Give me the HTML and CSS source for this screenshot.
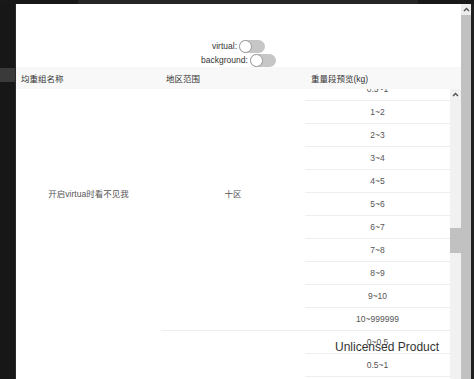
FILE: index.html
```html
<!DOCTYPE html>
<html lang="zh">
  <head>
    <meta charset="UTF-8" />
    <meta name="viewport" content="width=device-width, initial-scale=1.0" />
    <title>virtual table</title>
    <link rel="stylesheet" href="styles.css">
  </head>
  <body>
    <div class="topbar"><div class="topbar-tab"></div></div>
    <div class="screen">
      <div class="gutter"><div class="gutter-mark"></div></div>

      <div class="panel">
        <div class="controls">
          <div class="control"><span>virtual:</span><span class="switch"></span></div>
          <div class="control"><span>background:</span><span class="switch"></span></div>
        </div>

        <div class="table-head">
          <div class="th">均重组名称</div>
          <div class="th">地区范围</div>
          <div class="th">重量段预览(kg)</div>
        </div>

        <div class="table-body">
          <div class="scroll-view">
            <div class="rows">
              <div class="group">
                <div class="cell-name">开启virtua时看不见我</div>
                <div class="cell-area">十区</div>
                <div class="cell-list">
                  <div class="row">0~0.5</div>
                  <div class="row">0.5~1</div>
                  <div class="row">1~2</div>
                  <div class="row">2~3</div>
                  <div class="row">3~4</div>
                  <div class="row">4~5</div>
                  <div class="row">5~6</div>
                  <div class="row">6~7</div>
                  <div class="row">7~8</div>
                  <div class="row">8~9</div>
                  <div class="row">9~10</div>
                  <div class="row">10~999999</div>
                </div>
              </div>
              <div class="group">
                <div class="cell-name"></div>
                <div class="cell-area"></div>
                <div class="cell-list">
                  <div class="row">0~0.5</div>
                  <div class="row">0.5~1</div>
                  <div class="row">1~2</div>
                </div>
              </div>
            </div>
          </div>
          <div class="vbar inner">
            <div class="vbar-btn">
              <svg width="7" height="5" viewBox="0 0 7 5"><polyline points="1,4 3.5,1.5 6,4" fill="none" stroke="#505050" stroke-width="1.4"/></svg>
            </div>
            <div class="vbar-thumb"></div>
          </div>
        </div>

        <div class="watermark">Unlicensed Product</div>
      </div>

      <div class="vbar outer">
        <div class="vbar-btn">
          <svg width="7" height="5" viewBox="0 0 7 5"><polyline points="1,4 3.5,1.5 6,4" fill="none" stroke="#505050" stroke-width="1.4"/></svg>
        </div>
        <div class="vbar-thumb"></div>
      </div>
      <div class="edge"></div>
    </div>
  </body>
</html>
```

FILE: styles.css
```css
html, body {
  margin: 0;
  background: #1a1a1a;
  font-family: "Liberation Sans", "Noto Sans CJK SC", sans-serif;
  font-size: 8.5px;
  overflow: hidden;
}
.topbar {
  height: 4px;
  background: #181818;
  position: relative;
}
.topbar-tab {
  margin-left: 78px;
  width: 340px;
  height: 4px;
  background: #252525;
}
.screen {
  display: flex;
  height: 375px;
}
.gutter {
  width: 15px;
  background: #171717;
  border-right: 1px solid #2a2a2a;
}
.gutter-mark {
  margin-top: 64px;
  height: 14px;
  background: #3a3a3a;
}
.panel {
  width: 445px;
  background: white;
  display: flex;
  flex-direction: column;
  position: relative;
}
.controls {
  padding-top: 35px;
  color: #333;
}
.control {
  display: flex;
  justify-content: center;
  align-items: center;
  height: 14px;
}
.switch {
  position: relative;
  width: 26px;
  height: 13px;
  margin-left: 2px;
  border-radius: 7px;
  background: #c6c6c6;
}
.switch::before {
  content: "";
  position: absolute;
  left: 0;
  top: 0;
  width: 11px;
  height: 11px;
  border-radius: 50%;
  background: white;
  border: 1px solid #9a9a9a;
}
.table-head {
  display: grid;
  grid-template-columns: 145px 145px 1fr;
  height: 22px;
  background: #f8f8f8;
  color: #333;
}
.th {
  display: flex;
  align-items: center;
  padding-left: 5px;
}
.table-body {
  flex: 1;
  display: flex;
  min-height: 0;
}
.scroll-view {
  flex: 1;
  overflow: hidden;
}
.rows {
  margin-top: -34px;
}
.group {
  display: grid;
  grid-template-columns: 145px 144px 145px;
  color: #555;
}
.cell-name,
.cell-area {
  display: flex;
  align-items: center;
  justify-content: center;
}
.cell-area {
  border-bottom: 1px solid #eeeeee;
}
.row {
  box-sizing: border-box;
  height: 23px;
  display: flex;
  align-items: center;
  justify-content: center;
  border-bottom: 1px solid #eeeeee;
}
.vbar {
  display: flex;
  flex-direction: column;
}
.vbar-btn {
  height: 11px;
  display: flex;
  align-items: center;
  justify-content: center;
  background: #f1f1f1;
}
.inner {
  width: 11px;
  background: #f1f1f1;
}
.inner .vbar-thumb {
  margin-top: 128px;
  height: 25px;
  background: #c1c1c1;
}
.outer {
  width: 10px;
  background: #c1c1c1;
}
.outer .vbar-btn {
  background: #ececec;
}
.outer .vbar-thumb {
  flex: 1;
  background: #c1c1c1;
}
.edge {
  width: 3px;
  background: #1f1f1f;
}
.watermark {
  position: absolute;
  left: 319px;
  top: 336px;
  font-size: 12px;
  line-height: 14px;
  color: #333;
}
```
